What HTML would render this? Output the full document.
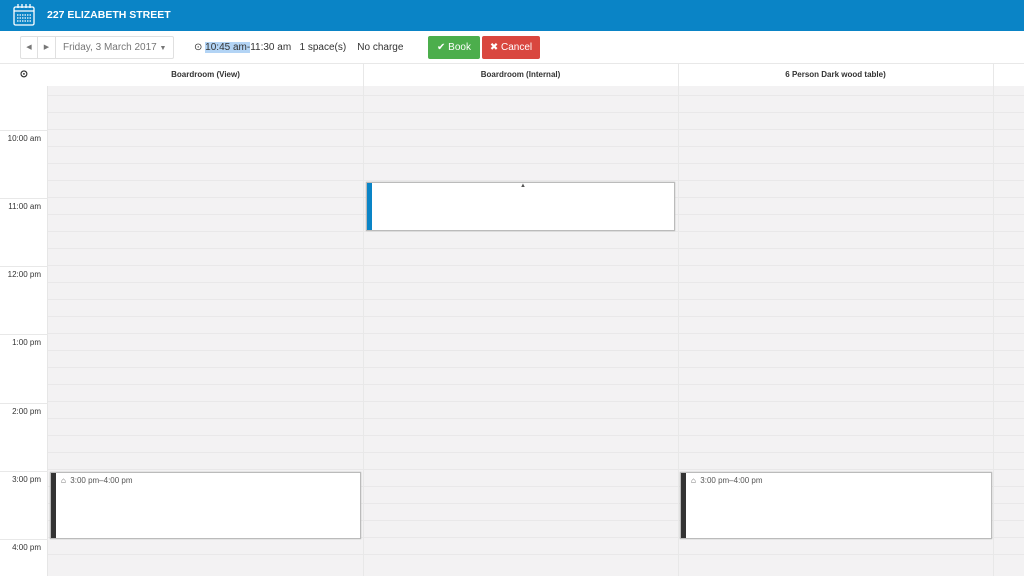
<!DOCTYPE html>
<html><head><style>
*{margin:0;padding:0;box-sizing:border-box}
body{width:1024px;height:576px;overflow:hidden;background:#fff;font-family:"Liberation Sans",sans-serif;position:relative}
.top{position:absolute;left:0;top:0;width:1024px;height:31px;background:#0a84c6;color:#fff}
.top .t{position:absolute;left:47px;top:9px;font-size:10.5px;font-weight:bold}
.tb{position:absolute;top:31px;left:0;width:1024px;height:33px;background:#fff;border-bottom:1px solid #e8e8e8}
.nav{position:absolute;left:20px;top:5px;width:154px;height:23px;border:1px solid #e0e0e0;border-radius:2px;font-size:10px;color:#777}
.nav span{position:absolute;top:0;height:21px;line-height:21px}
.btn{position:absolute;top:5px;height:23px;line-height:23px;color:#fff;font-size:10px;text-align:center;border-radius:2px}
.hdr{position:absolute;top:64px;height:22px;font-size:8px;font-weight:bold;color:#333;text-align:center;line-height:22px}
.grid{position:absolute;top:86px;left:48px;width:976px;height:490px;background-color:#f3f2f3;background-image:repeating-linear-gradient(to bottom,transparent 0,transparent 16px,#e9e8e9 16px,#e9e8e9 17px);background-position:0 -7px}
.vl{position:absolute;top:64px;width:1px;height:512px;background:#e8e8e8}
.time{position:absolute;left:0;top:86px;width:48px;height:490px;border-right:1px solid #e6e6e6;background:#fff}
.lbl{position:absolute;right:6px;font-size:8px;color:#333}
.hl{position:absolute;left:0;width:48px;height:1px;background:#e8e8e8}
.ev{position:absolute;background:#fff;border:1px solid #bbb;box-shadow:0 0 1px #aaa}
.ev .bar{position:absolute;left:0;top:0;bottom:0;width:5px}
.ev .tx{position:absolute;left:10px;top:3px;font-size:8px;color:#555}
</style></head><body>
<div class="top">
<svg style="position:absolute;left:12px;top:3px" width="24" height="24" viewBox="0 0 24 24" fill="none" stroke="#fff" stroke-width="1.3"><rect x="2" y="4" width="20" height="18" rx="1.5"/><line x1="2" y1="8" x2="22" y2="8"/><line x1="6" y1="1" x2="6" y2="5"/><line x1="10" y1="1" x2="10" y2="5"/><line x1="14" y1="1" x2="14" y2="5"/><line x1="18" y1="1" x2="18" y2="5"/><g stroke-width="1.2" stroke-dasharray="1.5 1"><line x1="5" y1="12" x2="19" y2="12"/><line x1="5" y1="15" x2="19" y2="15"/><line x1="5" y1="18" x2="19" y2="18"/></g></svg>
<div class="t">227 ELIZABETH STREET</div></div>
<div class="tb">
<div class="nav"><span style="left:0;width:17px;text-align:center;border-right:1px solid #e0e0e0;font-size:7px">◀</span><span style="left:17px;width:18px;text-align:center;border-right:1px solid #e0e0e0;font-size:7px">▶</span><span style="left:42px">Friday, 3 March 2017 <span style="position:static;font-size:7px">▼</span></span></div>
<div style="position:absolute;left:194px;top:11px;font-size:10px;color:#333">⊙ <span style="background:#b3d4f5">10:45 am-</span>11:30 am &nbsp; 1 space(s) &nbsp;&nbsp; No charge</div>
<div class="btn" style="left:428px;width:52px;background:#4cae4c">✔ Book</div>
<div class="btn" style="left:482px;width:58px;background:#d9473f">✖ Cancel</div>
</div>
<div class="hdr" style="left:0;width:48px;font-size:10px">⊙</div>
<div class="hdr" style="left:48px;width:315px">Boardroom (View)</div>
<div class="hdr" style="left:363px;width:315px">Boardroom (Internal)</div>
<div class="hdr" style="left:678px;width:315px">6 Person Dark wood table)</div>
<div class="grid"></div>
<div class="vl" style="left:363px"></div><div class="vl" style="left:678px"></div><div class="vl" style="left:993px"></div>
<div class="time">
<div class="hl" style="top:44px"></div><div class="lbl" style="top:48px">10:00 am</div>
<div class="hl" style="top:112px"></div><div class="lbl" style="top:116px">11:00 am</div>
<div class="hl" style="top:180px"></div><div class="lbl" style="top:184px">12:00 pm</div>
<div class="hl" style="top:248px"></div><div class="lbl" style="top:252px">1:00 pm</div>
<div class="hl" style="top:317px"></div><div class="lbl" style="top:321px">2:00 pm</div>
<div class="hl" style="top:385px"></div><div class="lbl" style="top:389px">3:00 pm</div>
<div class="hl" style="top:453px"></div><div class="lbl" style="top:457px">4:00 pm</div>
</div>
<div class="ev" style="left:366px;top:182px;width:309px;height:49px"><div class="bar" style="background:#0a84c6"></div><div style="position:absolute;left:153px;top:0;font-size:6px;color:#555">▲</div></div>
<div class="ev" style="left:50px;top:472px;width:311px;height:67px"><div class="bar" style="background:#333"></div><div class="tx">⌂ &nbsp;3:00 pm–4:00 pm</div></div>
<div class="ev" style="left:680px;top:472px;width:312px;height:67px"><div class="bar" style="background:#333"></div><div class="tx">⌂ &nbsp;3:00 pm–4:00 pm</div></div>
</body></html>
